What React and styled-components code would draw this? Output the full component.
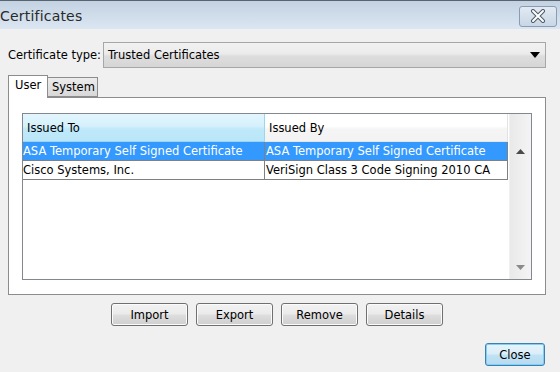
import React from "react";
import styled, { createGlobalStyle } from "styled-components";

const Global = createGlobalStyle`
  html, body { margin: 0; padding: 0; background: #f0f0f0; }
  body { font-family: "DejaVu Sans", Tahoma, sans-serif; }
`;

const Window = styled.div`
  width: 560px;
  height: 372px;
  background: #f0f0f0;
  display: flex;
  flex-direction: column;
  overflow: hidden;
  font-family: "DejaVu Sans", Tahoma, sans-serif;
  font-size: 11px;
  color: #000;
`;

const TitleBar = styled.div`
  height: 29px;
  box-sizing: border-box;
  border-top: 1px solid #5a6470;
  background: linear-gradient(to bottom, #c3d2e2, #dbe6f2);
  display: flex;
  align-items: center;
  justify-content: space-between;
  padding-right: 3px;
`;

const Title = styled.div`
  font-size: 14px;
  color: #2a2a2a;
  letter-spacing: 0.2px;
  margin-top: 1px;
`;

const CloseX = styled.div`
  width: 38px;
  height: 21px;
  box-sizing: border-box;
  border: 1px solid #8a9cb2;
  border-radius: 3px;
  background: linear-gradient(to bottom, #e2eaf3, #c9d6e5);
  display: flex;
  align-items: center;
  justify-content: center;
  margin-top: 2px;
`;

const Body = styled.div`
  flex: 1;
  display: flex;
  flex-direction: column;
  padding: 13px 14px 0 8px;
`;

const TypeRow = styled.div`
  display: flex;
  align-items: center;
  height: 26px;
`;

const Label = styled.span`
  width: 95px;
  font-size: 11.5px;
`;

const Combo = styled.div`
  flex: 1;
  height: 26px;
  box-sizing: border-box;
  border: 1px solid #a7a7a7;
  background: linear-gradient(to bottom, #f2f2f2 0%, #ebebeb 45%, #dddddd 55%, #d6d6d6 100%);
  display: flex;
  align-items: center;
  justify-content: space-between;
  padding: 0 5px 0 4px;
  font-size: 11.5px;
`;

const TabStrip = styled.div`
  display: flex;
  align-items: flex-end;
  margin-top: 7px;
  height: 22px;
`;

const Tab = styled.div`
  box-sizing: border-box;
  height: ${(p) => (p.$active ? "23px" : "20px")};
  padding: ${(p) => (p.$active ? "2px 0 0 6px" : "2px 0 0 4px")};
  width: ${(p) => p.$w}px;
  border: 1px solid #8c8c8c;
  border-bottom: ${(p) => (p.$active ? "none" : "1px solid #8c8c8c")};
  border-left: ${(p) => (p.$active || p.$first ? "1px solid #8c8c8c" : "none")};
  background: ${(p) => (p.$active ? "#ffffff" : "linear-gradient(to bottom, #ececec, #d8d8d8)")};
  font-size: 11.5px;
  position: relative;
  z-index: ${(p) => (p.$active ? 2 : 1)};
  margin-bottom: ${(p) => (p.$active ? "-1px" : "0")};
`;

const Panel = styled.div`
  width: 538px;
  height: 198px;
  box-sizing: border-box;
  border: 1px solid #8c8c8c;
  background: #ffffff;
  padding: 15px 13px 0 13px;
`;

const Table = styled.div`
  width: 510px;
  height: 167px;
  box-sizing: border-box;
  border: 1px solid #828790;
  background: #fff;
  display: flex;
`;

const Grid = styled.div`
  flex: 1;
  display: flex;
  flex-direction: column;
`;

const HeaderRow = styled.div`
  display: flex;
  height: 28px;
`;

const HeaderCell = styled.div`
  box-sizing: border-box;
  width: ${(p) => p.$w}px;
  height: 28px;
  display: flex;
  align-items: center;
  padding-left: 4px;
  font-size: 11.5px;
  border-right: 1px solid ${(p) => (p.$sorted ? "#9cd5ef" : "#e3e3e3")};
  border-bottom: 1px solid ${(p) => (p.$sorted ? "#9cd5ef" : "#e5e5e5")};
  background: ${(p) =>
    p.$sorted
      ? "linear-gradient(to bottom, #e3f6fd 0%, #d5f1fc 45%, #bfe9f9 55%, #b9e6f8 100%)"
      : "linear-gradient(to bottom, #ffffff 0%, #ffffff 45%, #f5f5f5 55%, #f3f3f3 100%)"};
`;

const Row = styled.div`
  display: flex;
  height: 19px;
`;

const Cell = styled.div`
  box-sizing: border-box;
  width: ${(p) => p.$w}px;
  height: 19px;
  display: flex;
  align-items: center;
  padding-left: ${(p) => (p.$first ? "0" : "1px")};
  white-space: nowrap;
  overflow: hidden;
  font-size: 11.5px;
  border-right: 1px solid #808080;
  border-bottom: 1px solid #808080;
  background: ${(p) => (p.$sel ? "#3399ff" : "#ffffff")};
  color: ${(p) => (p.$sel ? "#ffffff" : "#000000")};
`;

const ScrollBar = styled.div`
  width: 22px;
  height: 100%;
  background: linear-gradient(to right, #e9e9e9, #f4f4f4);
  border-left: 1px solid #f0f0f0;
  display: flex;
  flex-direction: column;
  justify-content: space-between;
  align-items: center;
  padding: 35px 0 9px;
  box-sizing: border-box;
`;

const Buttons = styled.div`
  display: flex;
  justify-content: center;
  gap: 8px;
  width: 538px;
  margin-top: 8px;
`;

const Button = styled.div`
  width: 77px;
  height: 23px;
  box-sizing: border-box;
  border: 1px solid ${(p) => (p.$default ? "#3c7fb1" : "#707070")};
  border-radius: 3px;
  background: ${(p) =>
    p.$default
      ? "linear-gradient(to bottom, #e8f4fb 0%, #dbeef9 45%, #c0e1f4 55%, #b6dbf1 100%)"
      : "linear-gradient(to bottom, #f2f2f2 0%, #ebebeb 45%, #dddddd 55%, #cfcfcf 100%)"};
  box-shadow: inset 0 0 0 1px ${(p) => (p.$default ? "#7fd0f8" : "#fbfbfb")};
  display: flex;
  align-items: center;
  justify-content: center;
  font-size: 11.5px;
`;

const Footer = styled.div`
  display: flex;
  justify-content: flex-end;
  width: 537px;
  margin-top: 17px;
`;

const CloseButton = styled(Button)`
  width: 60px;
`;

const cols = [242, 243];
const rows = [
  ["ASA Temporary Self Signed Certificate", "ASA Temporary Self Signed Certificate", true],
  ["Cisco Systems, Inc.", "VeriSign Class 3 Code Signing 2010 CA", false],
];

export default function App() {
  return (
    <Window>
      <Global />
      <TitleBar>
        <Title>Certificates</Title>
        <CloseX>
          <svg width="16" height="14" viewBox="0 0 16 14">
            <path d="M3 2 L13 12 M13 2 L3 12" stroke="#4d5a6a" strokeWidth="4" strokeLinecap="round" />
            <path d="M3 2 L13 12 M13 2 L3 12" stroke="#ffffff" strokeWidth="2" strokeLinecap="round" />
          </svg>
        </CloseX>
      </TitleBar>
      <Body>
        <TypeRow>
          <Label>Certificate type:</Label>
          <Combo>
            <span>Trusted Certificates</span>
            <svg width="10" height="6" viewBox="0 0 10 6">
              <path d="M0 0 L10 0 L5 6 Z" fill="#000" />
            </svg>
          </Combo>
        </TypeRow>
        <TabStrip>
          <Tab $active $w={40}>User</Tab>
          <Tab $w={50}>System</Tab>
        </TabStrip>
        <Panel>
          <Table>
            <Grid>
              <HeaderRow>
                <HeaderCell $w={cols[0]} $sorted>Issued To</HeaderCell>
                <HeaderCell $w={cols[1]}>Issued By</HeaderCell>
              </HeaderRow>
              {rows.map((r, i) => (
                <Row key={i}>
                  <Cell $w={cols[0]} $first $sel={r[2]}>{r[0]}</Cell>
                  <Cell $w={cols[1]} $sel={r[2]}>{r[1]}</Cell>
                </Row>
              ))}
            </Grid>
            <ScrollBar>
              <svg width="9" height="5" viewBox="0 0 9 5">
                <path d="M4.5 0 L9 5 L0 5 Z" fill="#4a4a4a" />
              </svg>
              <svg width="9" height="5" viewBox="0 0 9 5">
                <path d="M0 0 L9 0 L4.5 5 Z" fill="#8a8a8a" />
              </svg>
            </ScrollBar>
          </Table>
        </Panel>
        <Buttons>
          <Button>Import</Button>
          <Button>Export</Button>
          <Button>Remove</Button>
          <Button>Details</Button>
        </Buttons>
        <Footer>
          <CloseButton $default>Close</CloseButton>
        </Footer>
      </Body>
    </Window>
  );
}
